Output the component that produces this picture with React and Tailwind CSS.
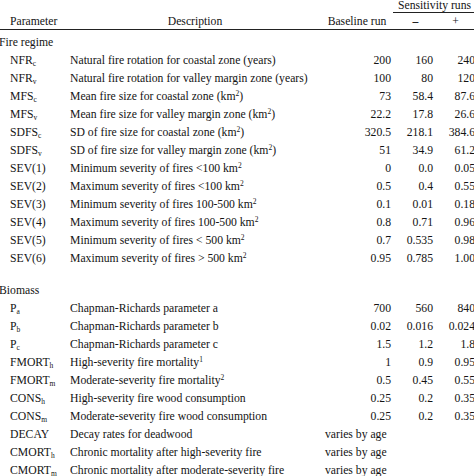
import React from "react";

const fire = [
  ["NFR", "c", "Natural fire rotation for coastal zone (years)", false, "200", "160", "240"],
  ["NFR", "v", "Natural fire rotation for valley margin zone (years)", false, "100", "80", "120"],
  ["MFS", "c", "Mean fire size for coastal zone (km", "paren", "73", "58.4", "87.6"],
  ["MFS", "v", "Mean fire size for valley margin zone (km", "paren", "22.2", "17.8", "26.6"],
  ["SDFS", "c", "SD of fire size for coastal zone (km", "paren", "320.5", "218.1", "384.6"],
  ["SDFS", "v", "SD of fire size for valley margin zone (km", "paren", "51", "34.9", "61.2"],
  ["SEV(1)", "", "Minimum severity of fires <100 km", "sq", "0", "0.0", "0.05"],
  ["SEV(2)", "", "Maximum severity of fires <100 km", "sq", "0.5", "0.4", "0.55"],
  ["SEV(3)", "", "Minimum severity of fires 100-500 km", "sq", "0.1", "0.01", "0.18"],
  ["SEV(4)", "", "Maximum severity of fires 100-500 km", "sq", "0.8", "0.71", "0.96"],
  ["SEV(5)", "", "Minimum severity of fires < 500 km", "sq", "0.7", "0.535", "0.98"],
  ["SEV(6)", "", "Maximum severity of fires > 500 km", "sq", "0.95", "0.785", "1.00"],
];

const biomass = [
  ["P", "a", "Chapman-Richards parameter a", false, "700", "560", "840"],
  ["P", "b", "Chapman-Richards parameter b", false, "0.02", "0.016", "0.024"],
  ["P", "c", "Chapman-Richards parameter c", false, "1.5", "1.2", "1.8"],
  ["FMORT", "h", "High-severity fire mortality", "1", "1", "0.9", "0.95"],
  ["FMORT", "m", "Moderate-severity fire mortality", "2", "0.5", "0.45", "0.55"],
  ["CONS", "h", "High-severity fire wood consumption", false, "0.25", "0.2", "0.35"],
  ["CONS", "m", "Moderate-severity fire wood consumption", false, "0.25", "0.2", "0.35"],
  ["DECAY", "", "Decay rates for deadwood", false, "varies", "", ""],
  ["CMORT", "h", "Chronic mortality after high-severity fire", false, "varies", "", ""],
  ["CMORT", "m", "Chronic mortality after moderate-severity fire", false, "varies", "", ""],
];

const cols = "grid grid-cols-[70px_252px_70px_41px_47px]";

function Sup({ children }) {
  return <span className="relative -top-[4px] text-[7.5px] leading-none">{children}</span>;
}

function Row({ r }) {
  const [p, sub, desc, mark, b, m, pl] = r;
  return (
    <div className={`${cols} h-[18px] items-center leading-[18px]`}>
      <div className="pl-[10px] whitespace-nowrap">
        {p}
        {sub && <span className="relative top-[2px] text-[7.5px] leading-none">{sub}</span>}
      </div>
      <div className="whitespace-nowrap">
        {desc}
        {mark === "paren" && (
          <>
            <Sup>2</Sup>)
          </>
        )}
        {mark === "sq" && <Sup>2</Sup>}
        {(mark === "1" || mark === "2") && <Sup>{mark}</Sup>}
      </div>
      {b === "varies" ? (
        <div className="col-span-3 pl-[3px] whitespace-nowrap">varies by age</div>
      ) : (
        <>
          <div className="text-right pr-[1px]">{b}</div>
          <div className="text-right">{m}</div>
          <div className="text-right pr-[5px] whitespace-nowrap">{pl}</div>
        </>
      )}
    </div>
  );
}

export default function App() {
  return (
    <div className="w-[474px] h-[476px] overflow-hidden bg-white text-[#141414] font-['Liberation_Serif','Times_New_Roman',serif] text-[11.7px]">
      <div className="w-[480px]">
        <div className="flex h-[13px]">
          <div className="w-[393px]" />
          <div className="flex-1 border-b border-[#222] pl-[5px] leading-[12px] whitespace-nowrap">
            Sensitivity runs
          </div>
        </div>
        <div className={`${cols} h-[17px] items-center leading-[17px] border-b-[1.5px] border-[#222]`}>
          <div className="pl-[10px]">Parameter</div>
          <div className="text-center pr-[2px]">Description</div>
          <div className="text-center">Baseline run</div>
          <div className="text-center pl-[6px] font-bold">–</div>
          <div className="text-center pr-[2px]">+</div>
        </div>
        <div className="mt-[4px] h-[18px] leading-[18px] -ml-[1px]">Fire regime</div>
        {fire.map((r, i) => (
          <Row key={i} r={r} />
        ))}
        <div className="mt-[14px] h-[18px] leading-[18px] -ml-[1px]">Biomass</div>
        {biomass.map((r, i) => (
          <Row key={i} r={r} />
        ))}
      </div>
    </div>
  );
}
